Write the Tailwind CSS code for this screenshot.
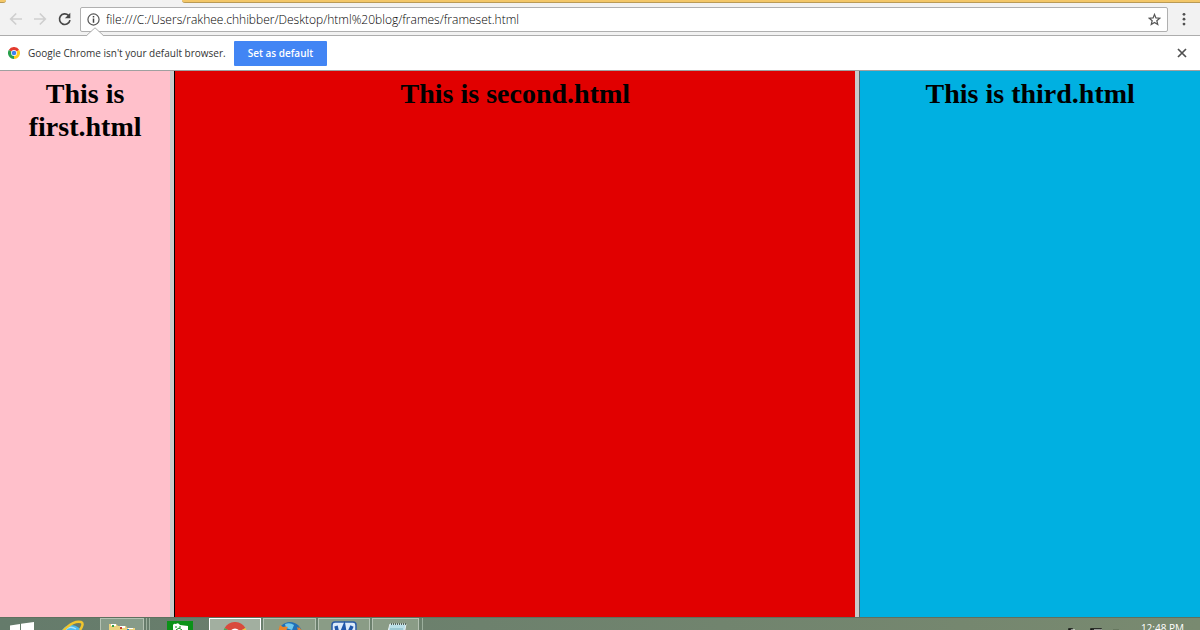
<!DOCTYPE html>
<html lang="en">
<head>
  <meta charset="UTF-8" />
  <meta name="viewport" content="width=device-width, initial-scale=1.0" />
  <title>frameset.html</title>
  <script src="https://cdn.jsdelivr.net/npm/@tailwindcss/browser@4"></script>
</head>
<body class="flex h-screen flex-col overflow-hidden bg-white font-['Open_Sans',sans-serif] text-[#333]">

  <!-- Tab strip -->
  <div class="flex h-[3px] shrink-0 bg-[#f2f2f2]">
    <div class="w-1.5 rounded-br-sm border-b border-[#b99a55] bg-[#f3c769]"></div>
    <div class="w-44"></div>
    <div class="grow rounded-bl-sm border-b border-[#b99a55] bg-[#f3c769]"></div>
  </div>

  <!-- Toolbar -->
  <header class="flex h-[33px] shrink-0 items-center border-b border-[#adadad] bg-[#f2f2f2] px-2">
    <button aria-label="Back" class="mr-2 size-4">
      <svg viewBox="0 0 16 16" class="size-4" fill="none" stroke="#cfcfcf" stroke-width="1.7"><path d="M14 8H3M8.2 2.5 2.7 8l5.5 5.5" /></svg>
    </button>
    <button aria-label="Forward" class="mr-2 size-4">
      <svg viewBox="0 0 16 16" class="size-4" fill="none" stroke="#cfcfcf" stroke-width="1.7"><path d="M2 8h11M7.8 2.5 13.3 8l-5.5 5.5" /></svg>
    </button>
    <button aria-label="Reload" class="mr-2 size-4">
      <svg viewBox="0 0 16 16" class="size-4"><path d="M12.5 4.4A5.3 5.3 0 1 0 14 9.2" fill="none" stroke="#484848" stroke-width="1.7" /><path d="M14.3 1.8v5.4H8.9z" fill="#484848" /></svg>
    </button>
    <div class="flex h-[25px] grow items-center rounded-xs border border-[#b0b0b0] bg-white px-1.5">
      <svg viewBox="0 0 14 14" class="mr-1.5 size-[13px] shrink-0"><circle cx="7" cy="7" r="6" fill="none" stroke="#555" stroke-width="1.3" /><path d="M6.2 6h1.6v4.5H6.2zM6.2 3.2h1.6v1.6H6.2z" fill="#444" /></svg>
      <input type="text" aria-label="Address" value="file:///C:/Users/rakhee.chhibber/Desktop/html%20blog/frames/frameset.html" class="h-5 min-w-0 grow bg-transparent text-xs font-light text-black outline-none" />
      <button aria-label="Bookmark" class="size-[13px]">
        <svg viewBox="0 0 14 14" class="size-[13px]" fill="none" stroke="#555" stroke-width="1.3"><path d="m7 1.5 1.5 3.8 4.2.3-3.2 2.7 1 4.1L7 10.2l-3.5 2.2 1-4.1-3.2-2.7 4.2-.3z" /></svg>
      </button>
    </div>
    <button aria-label="Menu" class="ml-2 size-4">
      <svg viewBox="0 0 16 16" class="size-4" fill="#505050"><circle cx="8" cy="3.3" r="1.4" /><circle cx="8" cy="8.2" r="1.4" /><circle cx="8" cy="13.1" r="1.4" /></svg>
    </button>
  </header>

  <!-- Default browser bar -->
  <div class="relative flex h-[35px] shrink-0 items-center border-b border-[#a0a0a0] bg-white pr-2.5 pl-2">
    <svg viewBox="0 0 20 10" class="absolute -top-[9px] left-[85px] h-2.5 w-5"><path d="M0 9.5h1L10 .8l9 8.7h1V10H0z" fill="#fff" /><path d="M1 9 10 .8 19 9" fill="none" stroke="#b0b0b0" /></svg>
    <svg viewBox="0 0 24 24" class="mr-2 size-3 shrink-0">
      <path d="M12 12 1.6 6A12 12 0 0 1 22.4 6z" fill="#e33b2e" />
      <path d="M12 12 22.4 6A12 12 0 0 1 12 24z" fill="#fccd20" />
      <path d="M12 12v12A12 12 0 0 1 1.6 6z" fill="#26a04b" />
      <circle cx="12" cy="12" r="5.8" fill="#fff" /><circle cx="12" cy="12" r="4.5" fill="#3d82f0" />
    </svg>
    <p class="text-[10px]">Google Chrome isn't your default browser.</p>
    <button class="ml-2 h-[25px] rounded-[1px] bg-[#4285f4] px-3.5 text-[10px] font-semibold text-white">Set as default</button>
    <button aria-label="Close" class="ml-auto size-4">
      <svg viewBox="0 0 16 16" class="size-4" fill="none" stroke="#505050" stroke-width="1.7"><path d="m4 4 8 8M12 4l-8 8" /></svg>
    </button>
  </div>

  <!-- Frames -->
  <main class="grid min-h-0 grow grid-cols-[1fr_4fr_2fr] gap-x-1 bg-[#cacaca] text-center font-['Liberation_Serif',serif] text-[28px] leading-[33px] font-bold text-black">
    <section class="bg-[#ffc0cb] px-2 pt-1.5"><h1>This is first.html</h1></section>
    <section class="border-l border-black bg-[#e10000] px-2 pt-1.5"><h1>This is second.html</h1></section>
    <section class="border-l border-[#52676d] bg-[#00b0e1] px-2 pt-1.5"><h1>This is third.html</h1></section>
  </main>

  <!-- Taskbar -->
  <footer class="flex h-[13px] shrink-0 items-start overflow-hidden border-t border-[#5f705f] bg-linear-to-r from-[#657b6b] to-[#798a70]">
    <button aria-label="Start" class="ml-2.5 w-6">
      <svg viewBox="0 0 24 24" class="mt-1 size-6" fill="#fff"><path d="M0 3.5 10 2v9H0zM11 1.8 24 0v11H11zM0 12h10v9L0 19.5zM11 12h13v11l-13-1.8z" /></svg>
    </button>
    <button aria-label="Internet Explorer" class="ml-6 w-7">
      <svg viewBox="0 0 28 28" class="mt-0.5 size-7" fill="none"><path d="M21 17H7m15 0a8.5 8.5 0 1 0-2 5" stroke="#48b9ef" stroke-width="6" /><path d="M7 10q5-5 11-1" stroke="#a8e2fa" stroke-width="1.5" /><path d="M2 21C0 12 15 0 23 2c3 1 1 5-1 8" stroke="#f0c52e" stroke-width="2.5" /></svg>
    </button>
    <button aria-label="File Explorer" class="ml-3.5 flex h-10 w-11 justify-center border border-[#b5c2b3] bg-[#879b89]">
      <svg viewBox="0 0 28 24" class="mt-1 h-6 w-7 shrink-0"><path d="M1 1h7l2 2h8l1 2h8v19H1z" fill="#ecd37d" /><path d="M3 1h5v2H3zm9 2h5v2h-5zm8 2h5v1h-5z" fill="#fff" /><path d="M4 2h2v2H4z" fill="#35a34b" /><path d="M12 4h2v2h-2z" fill="#c43d32" /><path d="M19 6h2v2h-2z" fill="#2489cf" /></svg>
    </button>
    <div class="ml-0.5 h-10 w-1 border-x border-[#9caf9d]"></div>
    <button aria-label="Store" class="ml-4 w-7">
      <svg viewBox="0 0 28 28" class="mt-[3px] size-7"><path d="M1 0h26v28H1z" fill="#0b9218" /><path d="M7 8V4q1-2 3-1 2-2 4 1l8 1v9H8z" fill="#fff" /><path d="M9 6h2m2 0h2m-5 3 3-2 3 2" fill="none" stroke="#0b9218" /></svg>
    </button>
    <div class="ml-[15px] flex gap-0.5">
      <button aria-label="Google Chrome" class="flex h-10 w-[52px] justify-center border border-white bg-[#a2afa0]">
        <svg viewBox="0 0 24 24" class="mt-[3px] size-6"><path d="M12 12 1.6 6A12 12 0 0 1 22.4 6z" fill="#d94a3c" /><path d="M12 12 22.4 6A12 12 0 0 1 12 24z" fill="#efc73c" /><path d="M12 12v12A12 12 0 0 1 1.6 6z" fill="#4ba653" /><circle cx="12" cy="12" r="5.5" fill="#fff" /><circle cx="12" cy="12" r="4" fill="#4285d4" /></svg>
      </button>
      <button aria-label="Firefox" class="flex h-10 w-[53px] justify-center border border-[#b5c2b3] bg-[#8a9c86]">
        <svg viewBox="0 0 24 24" class="mt-[3px] size-6"><circle cx="12" cy="12" r="12" fill="#2070b8" /><path d="M7 2q5-2 9 1l-2 5-6-2z" fill="#6fc7ec" /><path d="M0 10 2 3l3 2q3-1 5 0-2 2-1 3l4 1-4 2 2 4 6-1 3-5-1-4q2 1 2 2 0-2-1-3 7 6 3 14-5 8-13 7Q-2 21 0 10" fill="#ed832a" /></svg>
      </button>
      <button aria-label="Word" class="flex h-10 w-[52px] justify-center border border-[#b5c2b3] bg-[#8a9c86]">
        <svg viewBox="0 0 26 26" class="mt-0.5 size-[26px]"><rect x="1" y="1" width="24" height="24" rx="3" fill="#dceafa" stroke="#285ca7" stroke-width="1.5" /><path d="m5 5 3 13 5-12 2 12L21 5" fill="none" stroke="#2057aa" stroke-width="3.5" /></svg>
      </button>
      <button aria-label="Notepad" class="flex h-10 w-[47px] justify-center border border-[#b5c2b3] bg-[#8a9c86]">
        <svg viewBox="0 0 24 24" class="mt-[3px] size-6"><path d="M6 2h16l-4 22H0z" fill="#b9dfe7" stroke="#e6eeee" /><path d="M7 2h15" stroke="#54665d" stroke-width="2" stroke-dasharray="1 1" /><path d="M6 7h13M5 9h13" stroke="#7ab2bd" /></svg>
      </button>
    </div>
    <div class="h-10 w-1 border-r border-[#9caf9d]"></div>
    <div class="ml-auto flex pr-4 text-white">
      <svg viewBox="0 0 54 12" class="mr-5 h-3 w-[54px] shrink-0"><path d="M2 12v-1h3v1M24 12v-1h10v1" fill="none" stroke="#111" stroke-width="1.5" /><path d="M4 12h4M27 12h8" stroke="#fff" /><path d="M46 12h6" stroke="#57664f" /></svg>
      <time class="mt-1 text-[10px] leading-3 whitespace-nowrap">12:48 PM</time>
    </div>
  </footer>
</body>
</html>
